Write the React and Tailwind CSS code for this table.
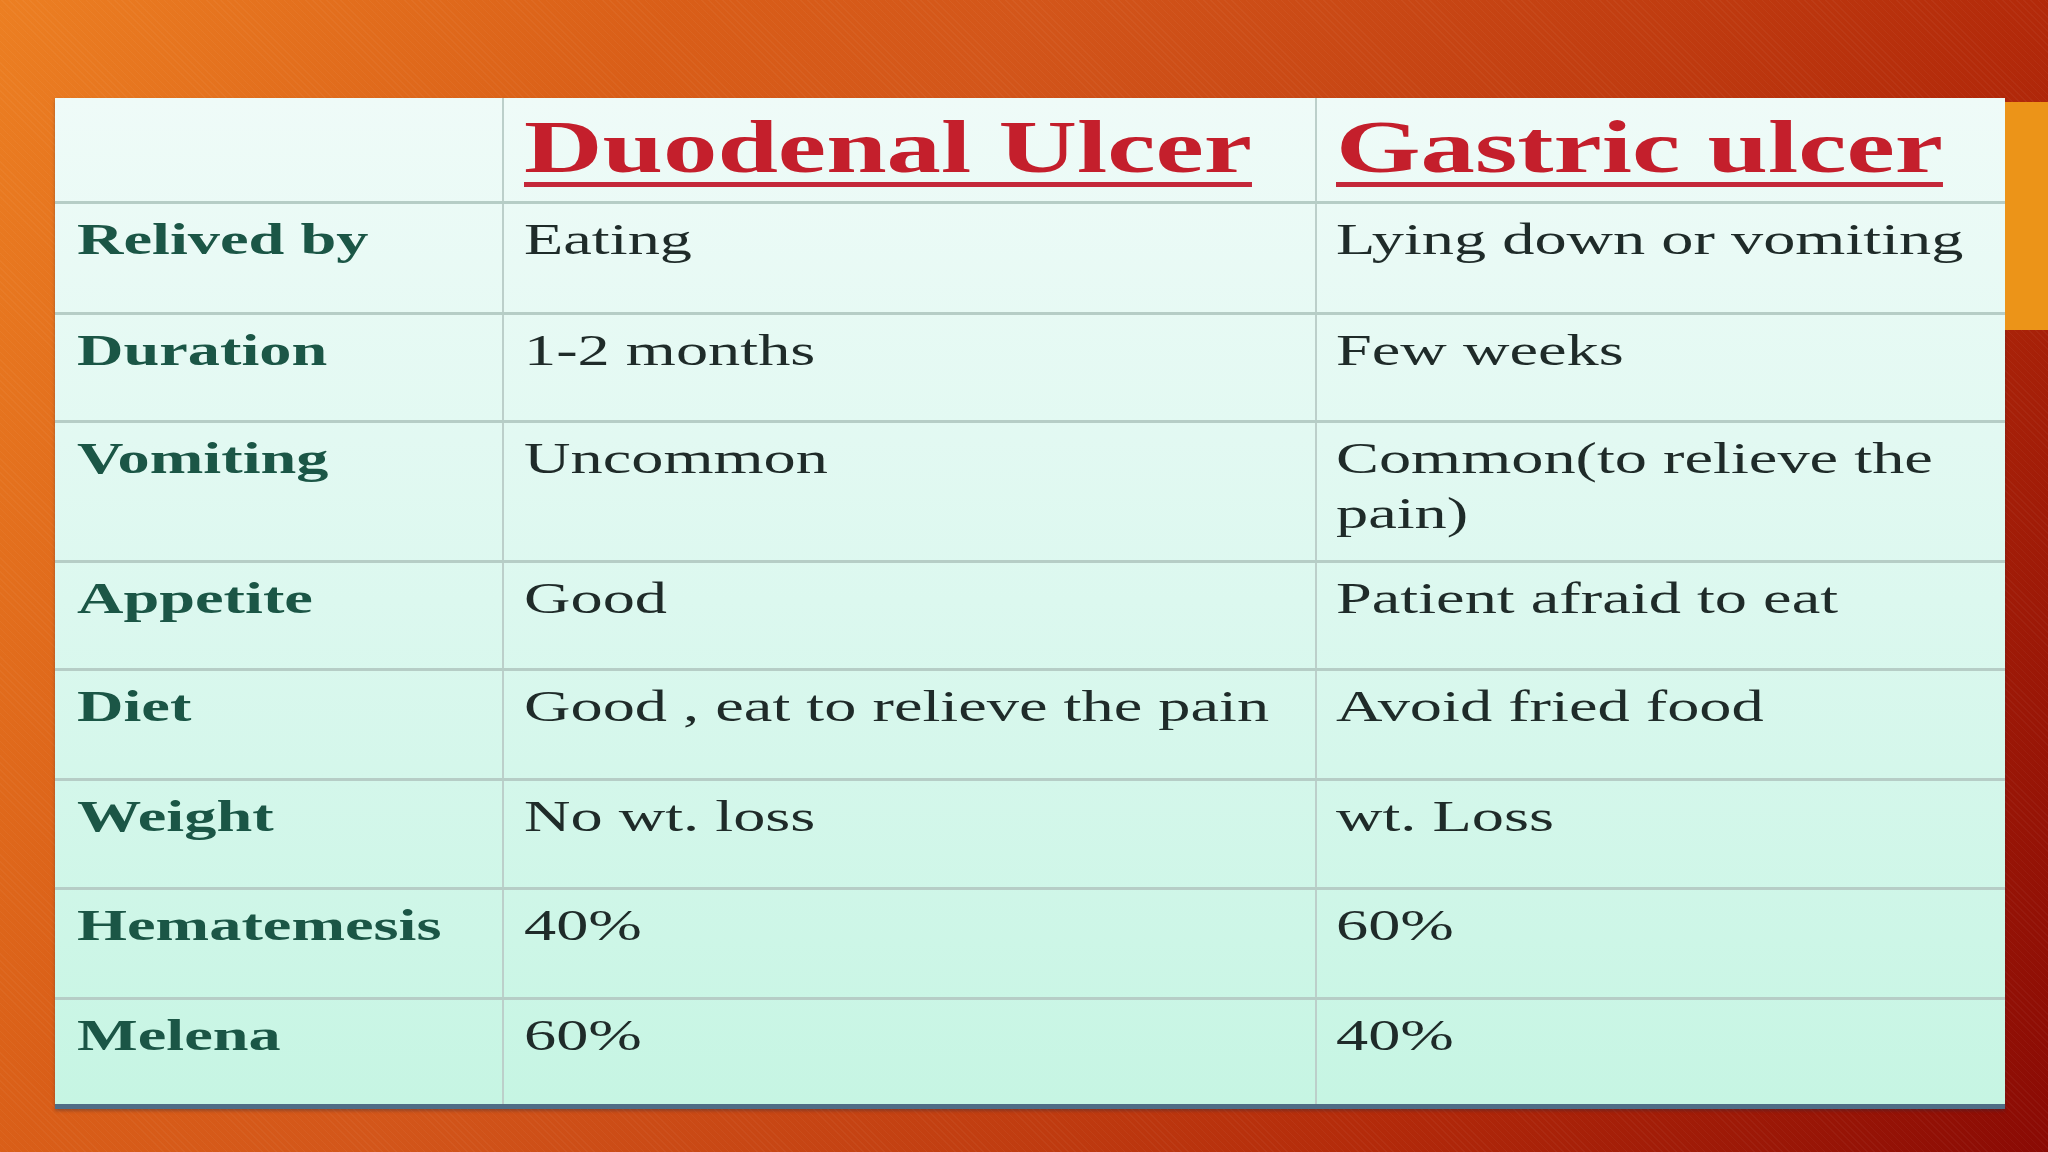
import React from 'react';

const ROWS = [
  { label:'Relived by',  du:'Eating',                          gu:['Lying down or vomiting'],          h:'h-[111px]' },
  { label:'Duration',    du:'1-2 months',                      gu:['Few weeks'],                       h:'h-[108px]' },
  { label:'Vomiting',    du:'Uncommon',                        gu:['Common(to relieve the','pain)'],   h:'h-[140px]' },
  { label:'Appetite',    du:'Good',                            gu:['Patient afraid to eat'],           h:'h-[108px]' },
  { label:'Diet',        du:'Good , eat to relieve the pain',  gu:['Avoid fried food'],                h:'h-[110px]' },
  { label:'Weight',      du:'No wt. loss',                     gu:['wt. Loss'],                        h:'h-[109px]' },
  { label:'Hematemesis', du:'40%',                             gu:['60%'],                             h:'h-[110px]' },
  { label:'Melena',      du:'60%',                             gu:['40%'],                             h:'h-[107px]' },
];

// the slide image is stretched sideways, so every text run gets a horizontal scale
const Txt = ({ children, className='' }) => (
  <span className={`inline-block whitespace-nowrap origin-left scale-x-[1.43] ${className}`}>{children}</span>
);

const Head = ({ children }) => (
  <span className="inline-block whitespace-nowrap origin-left scale-x-[1.45] font-bold text-[75px] leading-[90px] text-[#c41f2c] underline decoration-[5px] underline-offset-[10px] decoration-[#c4283a]">
    {children}
  </span>
);

export default function App() {
  return (
    <div className="w-full h-[1152px] overflow-hidden font-['Liberation_Serif',serif] bg-[repeating-linear-gradient(45deg,rgba(255,255,255,0.035)_0px,rgba(255,255,255,0.035)_1px,transparent_1px,transparent_5px),linear-gradient(120deg,#ec7f22_0%,#d95e18_25%,#d3561a_38%,#c03c10_62%,#b32a0a_75%,#8a0a04_100%)]">
      <div className="flex items-start pt-[98px] pl-[55px]">
        {/* Table */}
        <div className="w-[1950px] bg-[linear-gradient(180deg,#effbf8_0%,#dcf8ef_50%,#c6f5e3_100%)] border-b-[5px] border-[#4f6d86] shadow-[0_2px_3px_rgba(40,40,60,0.35)]">
          <div className="grid grid-cols-[447px_813px_690px] h-[103px]">
            <div />
            <div className="border-l-2 border-[#bccfca] pl-[20px] pt-[4px]"><Head>Duodenal Ulcer</Head></div>
            <div className="border-l-2 border-[#bccfca] pl-[19px] pt-[4px]"><Head>Gastric ulcer</Head></div>
          </div>
          {ROWS.map(r=>(
            <div key={r.label} className={`grid grid-cols-[447px_813px_690px] border-t-[3px] border-[#b6cdc6] ${r.h}`}>
              <div className="pl-[22px] pt-[8px] text-[45px] leading-[55px]">
                <Txt className="font-bold text-[#1b5646]">{r.label}</Txt>
              </div>
              <div className="border-l-2 border-[#bccfca] pl-[20px] pt-[8px] text-[45px] leading-[55px] text-[#1f2b29]">
                <Txt>{r.du}</Txt>
              </div>
              <div className="border-l-2 border-[#bccfca] pl-[19px] pt-[8px] text-[45px] leading-[55px] text-[#1f2b29] flex flex-col items-start">
                {r.gu.map(line=><Txt key={line}>{line}</Txt>)}
              </div>
            </div>
          ))}
        </div>

        {/* orange accent at the slide edge */}
        <div className="w-[43px] h-[228px] mt-[4px] bg-[#ec9418]" />
      </div>
    </div>
  );
}
